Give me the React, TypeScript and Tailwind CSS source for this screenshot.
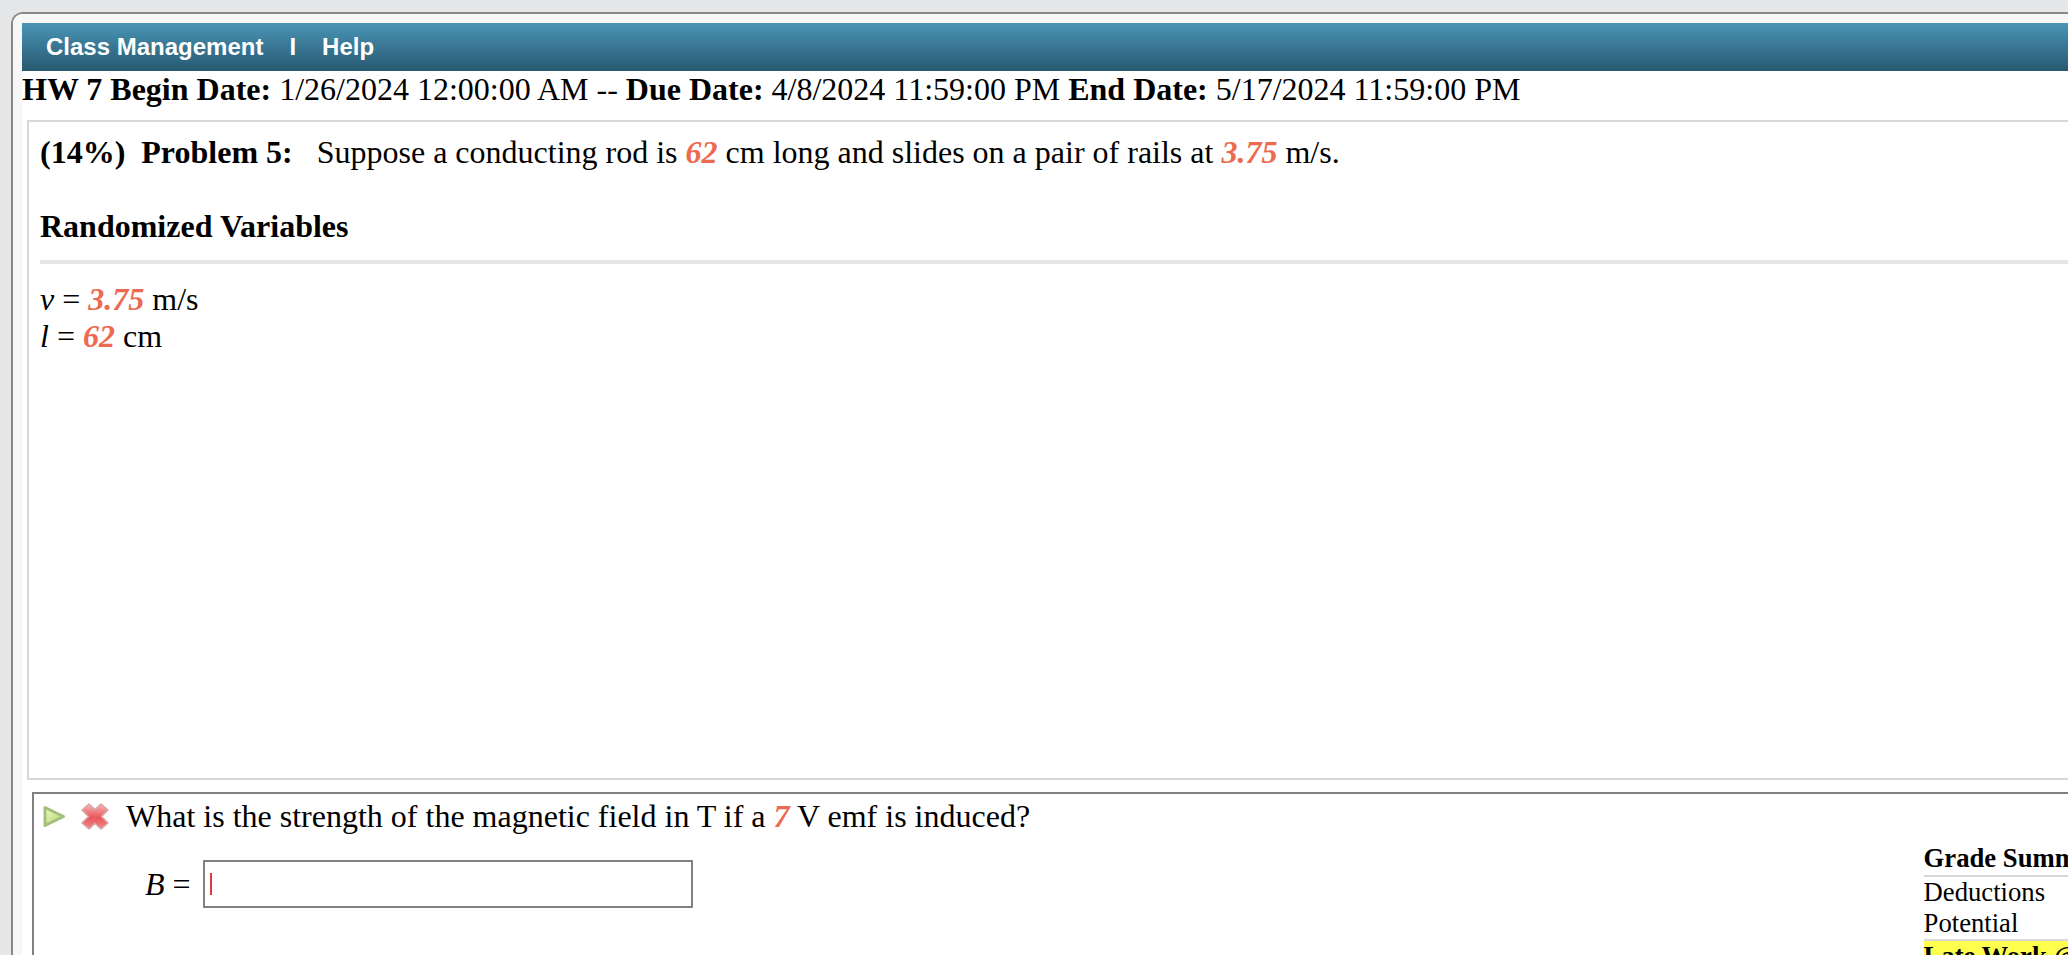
// HW problem page: blue nav bar, due dates, problem statement and the answer box.

function PlayIcon() {
    return (
        <svg width="24" height="23" viewBox="0 0 24 23" className="block">
            <defs>
                <linearGradient id="playFill" x1="0" y1="0" x2="1" y2="1">
                    <stop offset="0" stopColor="#eef7c8" />
                    <stop offset="1" stopColor="#b3d566" />
                </linearGradient>
            </defs>
            <path
                d="M3 2.5 L21.5 11.5 L3 20.5 Z"
                fill="url(#playFill)"
                stroke="#a3c07a"
                strokeWidth="3"
                strokeLinejoin="round"
            />
        </svg>
    );
}

function CrossIcon() {
    return (
        <svg width="30" height="29" viewBox="0 0 30 29" className="block">
            <defs>
                <linearGradient id="crossFill" x1="0" y1="0" x2="0" y2="1">
                    <stop offset="0" stopColor="#f9b4b4" />
                    <stop offset="0.55" stopColor="#e8565c" />
                    <stop offset="1" stopColor="#ef8a8c" />
                </linearGradient>
            </defs>
            <path
                d="M9 2 L15 7.5 L21 2 L28 8 L21.5 14.5 L28 21 L21 27 L15 21.5 L9 27 L2 21 L8.5 14.5 L2 8 Z"
                fill="url(#crossFill)"
                stroke="#d9a9a9"
                strokeWidth="1.6"
                strokeLinejoin="round"
            />
        </svg>
    );
}

function Value({ children }: { children: React.ReactNode }) {
    return <b className="italic text-[#ec6a4f]">{children}</b>;
}

export default function App() {
    return (
        <div className="h-[955px] w-[2068px] overflow-hidden bg-[#e6e7e9] pl-[11px] pt-3 font-['Liberation_Serif',serif] text-black">
            <div className="h-[960px] w-[2200px] rounded-tl-[12px] border-l-2 border-t-2 border-[#888888] bg-white">
                <div className="h-[9px] rounded-tl-[10px] bg-[#f7f7f7]" />
                <div className="flex">
                    <div className="h-[940px] w-[9px] shrink-0 bg-[#f7f7f7]" />
                    <div className="min-w-0 flex-1">
                        <nav className="flex h-12 items-center gap-[26px] bg-gradient-to-b from-[#4a95b7] to-[#285870] pl-6 font-['Liberation_Sans',sans-serif] text-[24px] font-bold text-white">
                            <span>Class Management</span>
                            <span>I</span>
                            <span>Help</span>
                        </nav>
                        <p className="h-[49px] whitespace-nowrap text-[32px] leading-[37px]">
                            <b>HW 7 Begin Date:</b> 1/26/2024 12:00:00 AM -- <b>Due Date:</b> 4/8/2024 11:59:00 PM{' '}
                            <b>End Date:</b> 5/17/2024 11:59:00 PM
                        </p>
                        <section className="ml-[5px] h-[660px] border-2 border-[#d8d8d8] pl-[11px] pr-3 text-[32px] leading-[37px]">
                            <p className="whitespace-pre pt-3">
                                <b>(14%)  Problem 5:</b>
                                {'   '}Suppose a conducting rod is <Value>62</Value> cm long and slides on a pair of rails at{' '}
                                <Value>3.75</Value> m/s.
                            </p>
                            <h2 className="mt-[37px] text-[32px] font-bold">Randomized Variables</h2>
                            <hr className="mt-[15px] h-1 border-0 bg-[#e6e6e6]" />
                            <p className="mt-[17px]">
                                <i>v</i> = <Value>3.75</Value> m/s
                            </p>
                            <p>
                                <i>l</i> = <Value>62</Value> cm
                            </p>
                        </section>
                        <section className="ml-[10px] mt-3 h-[200px] border-2 border-[#808080] pl-2 text-[32px]">
                            <div className="flex items-center pt-[4px]">
                                <PlayIcon />
                                <span className="ml-[14px]">
                                    <CrossIcon />
                                </span>
                                <p className="ml-[16px] leading-[37px]">
                                    What is the strength of the magnetic field in T if a <Value>7</Value> V emf is induced?
                                </p>
                            </div>
                            <div className="mt-[1px] flex items-start">
                                <label className="ml-[103px] mt-[30px] shrink-0 whitespace-nowrap leading-[37px]">
                                    <i>B</i> =
                                </label>
                                <div className="ml-[12px] mt-6 flex h-12 w-[490px] shrink-0 items-center rounded-[1px] border-2 border-[#808080] pl-[5px]">
                                    <span className="h-[22px] w-[2px] bg-[#e23a3a]" />
                                </div>
                                <table className="ml-[1231px] mt-[7px] w-[300px] shrink-0 text-[26.67px] leading-[31px]">
                                    <tbody>
                                        <tr>
                                            <th className="border-b-2 border-[#d8d8d8] pb-[1px] text-left">Grade Summary</th>
                                        </tr>
                                        <tr>
                                            <td>Deductions</td>
                                        </tr>
                                        <tr>
                                            <td className="border-b-2 border-[#d8d8d8]">Potential</td>
                                        </tr>
                                        <tr>
                                            <th className="bg-[#ffff4d] text-left">Late Work @</th>
                                        </tr>
                                    </tbody>
                                </table>
                            </div>
                        </section>
                    </div>
                </div>
            </div>
        </div>
    );
}
